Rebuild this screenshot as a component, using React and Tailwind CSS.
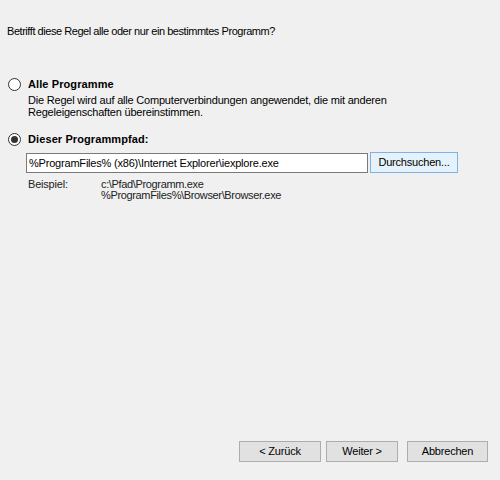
import { useState } from 'react';

function Radio({ checked, onClick }) {
    return (
        <button
            type="button"
            onClick={onClick}
            className="flex items-center justify-center w-[13px] h-[13px] rounded-full border border-[#333333] bg-white shrink-0"
        >
            {checked && <span className="block w-[7px] h-[7px] rounded-full bg-[#333333]" />}
        </button>
    );
}

function WinButton({ children, focused, className = '' }) {
    return (
        <button
            type="button"
            className={[
                'h-[21px] text-[11px] text-black leading-none border',
                focused ? 'bg-[#e5f1fb] border-[#7fb1e2]' : 'bg-[#e1e1e1] border-[#adadad]',
                className,
            ].join(' ')}
        >
            {children}
        </button>
    );
}

export default function App() {
    const [mode, setMode] = useState('path');
    const [path, setPath] = useState('%ProgramFiles% (x86)\\Internet Explorer\\iexplore.exe');

    return (
        <div
            className="w-[500px] h-[480px] bg-[#f0f0f0] flex flex-col text-[11px] text-black tracking-[-0.2px]"
            style={{ fontFamily: '"Liberation Sans", Arial, sans-serif' }}
        >
            {/* Question */}
            <p className="pl-[7px] pt-[25px] leading-[13px] tracking-[-0.45px]">
                Betrifft diese Regel alle oder nur ein bestimmtes Programm?
            </p>

            {/* Option: all programs */}
            <div className="mt-[39px] pl-[8px]">
                <label className="flex items-center gap-[7px] h-[14px]">
                    <Radio checked={mode === 'all'} onClick={() => setMode('all')} />
                    <span className="font-bold tracking-[0.1px]">Alle Programme</span>
                </label>
                <p className="pl-[20px] pt-[3px] leading-[12px]">
                    Die Regel wird auf alle Computerverbindungen angewendet, die mit anderen
                    <br />
                    Regeleigenschaften übereinstimmen.
                </p>
            </div>

            {/* Option: program path */}
            <div className="mt-[14px] pl-[8px]">
                <label className="flex items-center gap-[7px] h-[14px]">
                    <Radio checked={mode === 'path'} onClick={() => setMode('path')} />
                    <span className="font-bold tracking-[0.1px]">Dieser Programmpfad:</span>
                </label>
                <div className="flex items-center gap-[2px] pl-[18px] mt-[6px]">
                    <input
                        value={path}
                        onChange={(e) => setPath(e.target.value)}
                        className="w-[342px] h-[20px] bg-white border border-[#7a7a7a] px-[2px] text-[11px] outline-none"
                    />
                    <WinButton focused className="w-[88px]">Durchsuchen...</WinButton>
                </div>
                <div className="grid grid-cols-[73px_1fr] pl-[20px] mt-[6px] leading-[11px] text-[#222222]">
                    <span>Beispiel:</span>
                    <span className="tracking-[-0.35px]">
                        c:\Pfad\Programm.exe
                        <br />
                        %ProgramFiles%\Browser\Browser.exe
                    </span>
                </div>
            </div>

            {/* Wizard buttons */}
            <div className="mt-auto mb-[18px] flex justify-end gap-[5px] pr-[12px]">
                <WinButton className="w-[82px]">&lt; Zurück</WinButton>
                <WinButton className="w-[72px] mr-[4px]">Weiter &gt;</WinButton>
                <WinButton className="w-[81px]">Abbrechen</WinButton>
            </div>
        </div>
    );
}
